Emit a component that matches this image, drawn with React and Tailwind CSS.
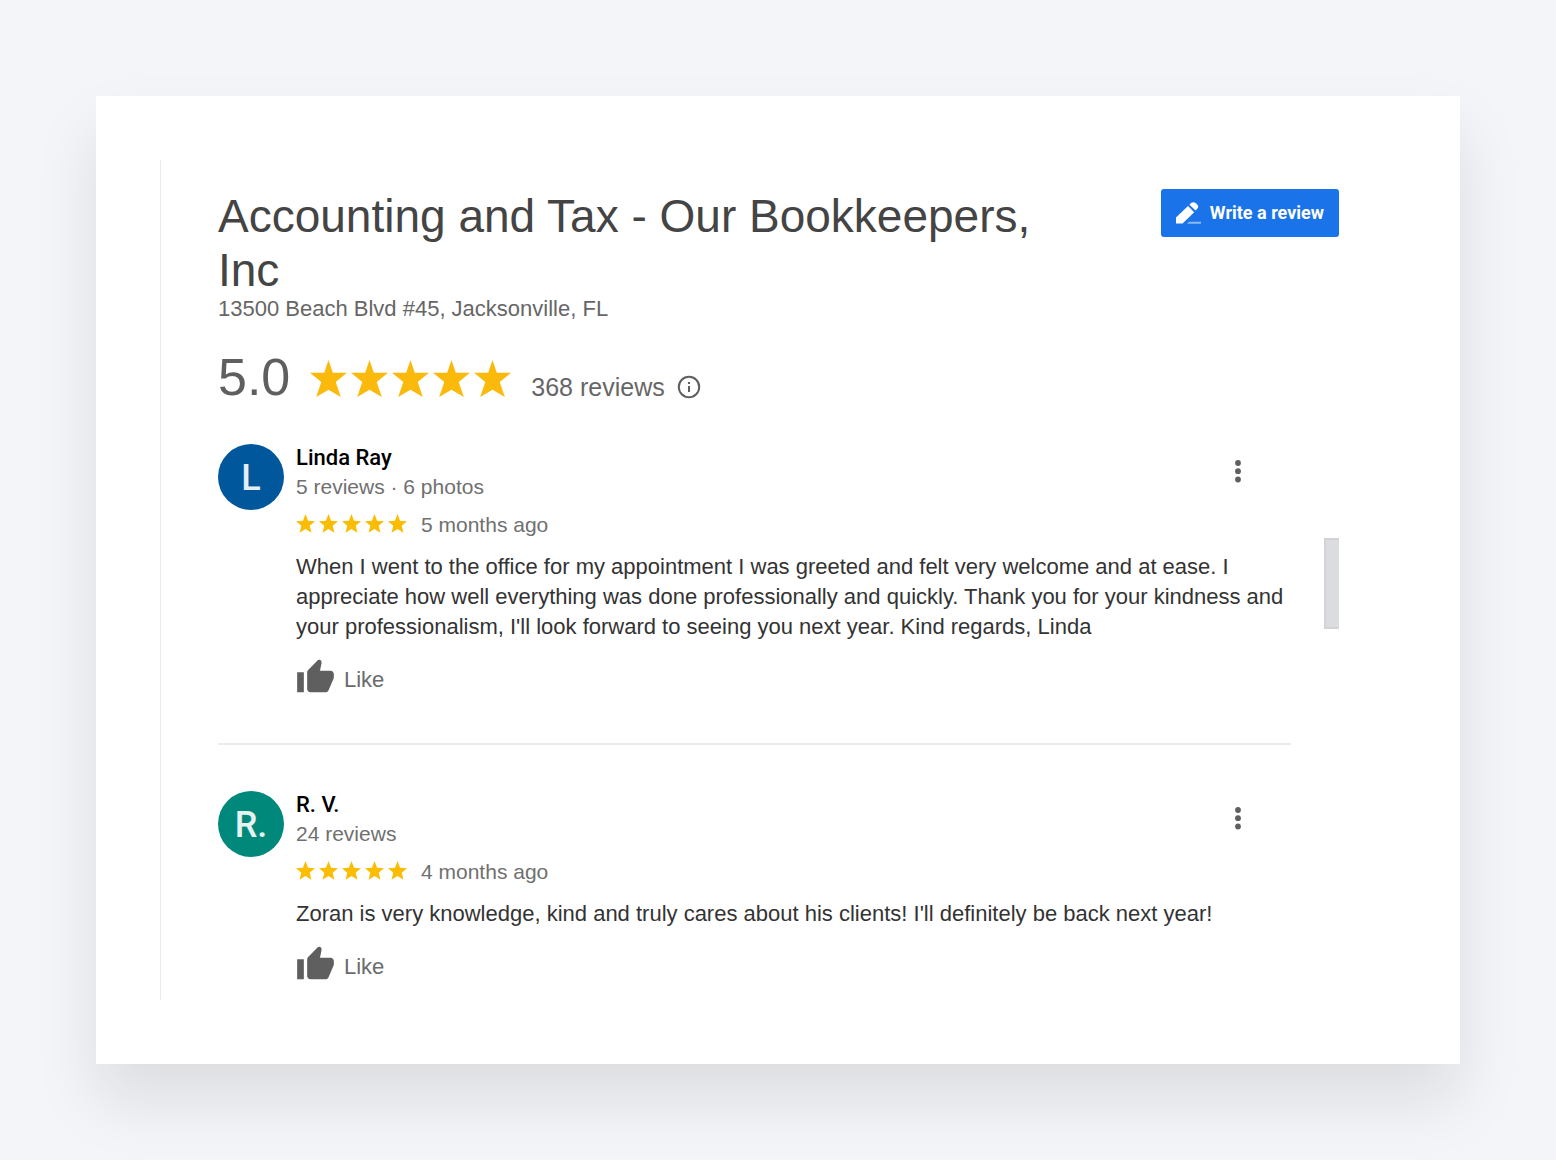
import clsx from "clsx";

const reviews = [
  {
    id: 1,
    name: "Linda Ray",
    initial: "L",
    color: "bg-[#01579b]",
    meta: "5 reviews · 6 photos",
    time: "5 months ago",
    text: "When I went to the office for my appointment I was greeted and felt very welcome and at ease. I appreciate how well everything was done professionally and quickly. Thank you for your kindness and your professionalism, I'll look forward to seeing you next year. Kind regards, Linda",
  },
  {
    id: 2,
    name: "R. V.",
    initial: "R.",
    color: "bg-[#00897b]",
    meta: "24 reviews",
    time: "4 months ago",
    text: "Zoran is very knowledge, kind and truly cares about his clients! I'll definitely be back next year!",
  },
];

const Stars = ({ big }) => (
  <div role="img" aria-label="5 out of 5 stars" className="flex gap-1">
    {[1, 2, 3, 4, 5].map((n) => (
      <svg
        key={n}
        viewBox={big ? "0 0 36 36" : "0 0 20 20"}
        className={big ? "h-[37px] w-[37px] text-[#fbb90b]" : "h-[19px] w-[19px] text-[#fbbc04]"}
        fill="currentColor"
      >
        {big ? (
          <path d="M18 0l4.2 12.5H36l-11 9L30 36l-12-7-12 7 5-14.5-11-9h13.8z" />
        ) : (
          <path d="M10 0l2.7 7 7.3.5-5.6 4.9 1.9 7.3L10 15.7l-6.3 4 1.9-7.3L0 7.5 7.3 7z" />
        )}
      </svg>
    ))}
  </div>
);

const PencilIcon = () => (
  <svg viewBox="0 0 26 22" className="h-[22px] w-[26px]" fill="#fff">
    <path d="M0 15.6L12 4l6.2 6.2L6.6 21.6H0z" />
    <path d="M13.4 2.7l2-1.9Q17.8-.6 19.8 1.2l1.6 1.6q1.6 2 0 3.8l-1.8 2z" />
    <path d="M13 19.8h12v1.9H11z" opacity="0.5" />
  </svg>
);

const InfoIcon = () => (
  <svg viewBox="0 0 24 24" className="h-6 w-6" fill="none" stroke="#5f5f5f" strokeWidth="2">
    <circle cx="12" cy="12" r="10.2" />
    <path d="M12 11v6M12 7v2" />
  </svg>
);

const ThumbIcon = () => (
  <svg viewBox="0 0 24 24" className="h-10 w-10" fill="#5f5f5f">
    <path d="M.7 20.6h4V8.6h-4v12zm22-11c0-1.1-.9-2-2-2h-6.31l.95-4.57c.1-.7-.2-1.4-.7-1.8-.5-.4-1.2-.3-1.6.1L7.29 7.19C6.92 7.55 6.7 8.05 6.7 8.6v10c0 1.1.9 2 2 2h9c.83 0 1.54-.5 1.84-1.22l3.02-7.05c.09-.23.14-.47.14-.73v-2z" />
  </svg>
);

const DotsIcon = () => (
  <svg viewBox="0 0 12 24" className="h-6 w-3" fill="#5f5f5f">
    <circle cx="6" cy="4" r="2.9" />
    <circle cx="6" cy="12.2" r="2.9" />
    <circle cx="6" cy="20.5" r="2.9" />
  </svg>
);

const Review = ({ review }) => (
  <article className="flex items-start gap-3">
    <div
      className={clsx(
        "flex h-[66px] w-[66px] shrink-0 items-center justify-center rounded-full pt-0.5 font-[Roboto] text-4xl font-medium text-white/90",
        review.color
      )}
    >
      {review.initial}
    </div>
    <div className="min-w-0 flex-1">
      <div className="flex items-start justify-between">
        <div>
          <h2 className="font-[Roboto] text-[22px] leading-7 font-medium text-black">{review.name}</h2>
          <p className="text-[21px] leading-[30px] text-[#707070]">{review.meta}</p>
        </div>
        <button type="button" aria-label="More options" className="mt-[15px] mr-[47px]">
          <DotsIcon />
        </button>
      </div>
      <div className="mt-2 flex items-start gap-[14px]">
        <div className="pt-1">
          <Stars />
        </div>
        <span className="text-[21px] leading-[30px] text-[#707070]">{review.time}</span>
      </div>
      <p className="mt-3 text-[22px] leading-[30px] text-[#333]">{review.text}</p>
      <button type="button" className="mt-4 flex items-center gap-2 text-[22px] text-[#6b6b6b]">
        <ThumbIcon />
        <span className="pt-1 leading-[30px]">Like</span>
      </button>
    </div>
  </article>
);

const App = () => {
  return (
    <div className="overflow-hidden bg-[#f4f5f9] p-24 font-['Liberation_Sans',Arial,sans-serif]">
      <div className="bg-white p-16 shadow-[0_36px_60px_rgba(20,20,0,0.1)]">
        <main className="border-l border-[#ebebeb] pt-[29px] pr-[57px] pb-[15px] pl-[57px]">
          <header className="flex items-start justify-between">
            <div className="max-w-[860px]">
              <h1 className="text-[46px] leading-[54px] text-[#444]">
                Accounting and Tax - Our Bookkeepers, Inc
              </h1>
              <p className="text-[22px] leading-6 text-[#666]">13500 Beach Blvd #45, Jacksonville, FL</p>
            </div>
            <button
              type="button"
              className="flex h-12 shrink-0 items-center gap-2 rounded-[3px] bg-[#1a73e8] px-[15px] font-[Roboto] text-lg font-bold text-white"
            >
              <PencilIcon />
              Write a review
            </button>
          </header>

          <div className="mt-[26px] flex h-[60px] items-center">
            <span className="text-[52px] leading-[56px] text-[#5f5f5f]">5.0</span>
            <div className="ml-5 pt-0.5">
              <Stars big />
            </div>
            <span className="mt-5 ml-5 text-[25px] leading-7 text-[#666]">368 reviews</span>
            <button type="button" aria-label="About reviews" className="mt-5 ml-3">
              <InfoIcon />
            </button>
          </div>

          <div className="mt-[37px] flex items-start">
            <div className="min-w-0 flex-1 divide-y-2 divide-[#ebebeb]">
              {reviews.map((review) => (
                <div key={review.id} className="not-first:pt-[46px] not-last:pb-[45px]">
                  <Review review={review} />
                </div>
              ))}
            </div>
            {/* Scroll thumb */}
            <div className="mt-[94px] ml-[33px] h-[91px] w-[15px] border-y-2 border-l-2 border-[#d2d3d6] bg-[#dadce0]" />
          </div>
        </main>
      </div>
    </div>
  );
};

export default App;
